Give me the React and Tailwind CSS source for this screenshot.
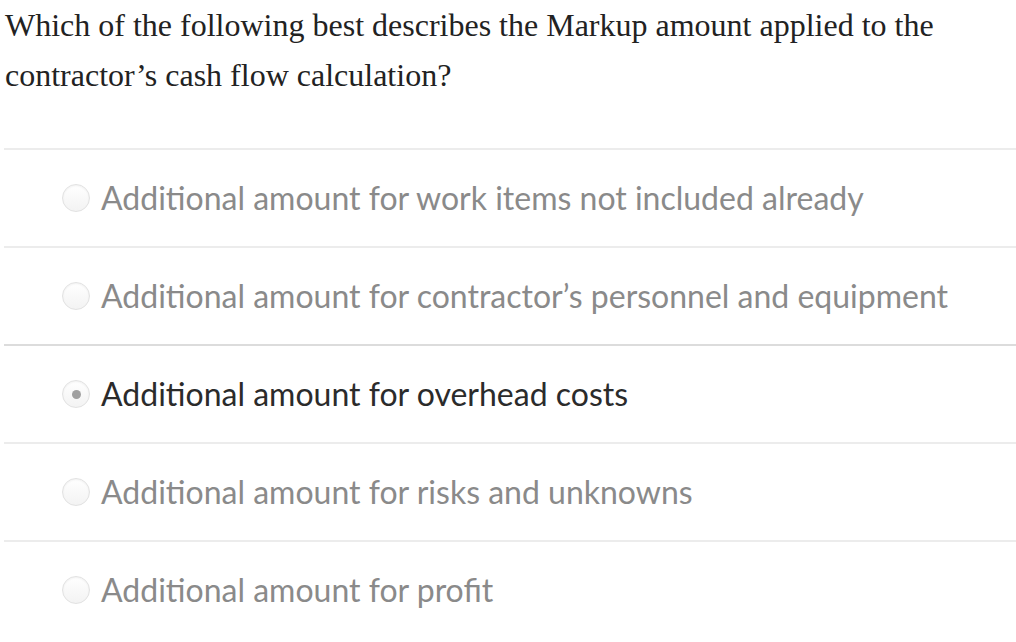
import React from "react";

const options = [
  "Additional amount for work items not included already",
  "Additional amount for contractor\u2019s personnel and equipment",
  "Additional amount for overhead costs",
  "Additional amount for risks and unknowns",
  "Additional amount for profit",
];

function Radio({ checked }) {
  return (
    <span className="relative flex h-[28px] w-[28px] shrink-0 items-center justify-center rounded-full border border-[#e2e2e2] bg-gradient-to-b from-[#ffffff] to-[#f3f3f3] shadow-[inset_0_1px_2px_rgba(0,0,0,0.06)]">
      {checked && <span className="h-[9px] w-[9px] rounded-full bg-[#a0a0a0]" />}
    </span>
  );
}

export default function App() {
  return (
    <div className="min-h-[642px] w-[1016px] overflow-hidden bg-white">
      <p className="pl-[5px] pt-0 font-['Liberation_Serif',serif] text-[32px] leading-[50px] text-[#222]">
        Which of the following best describes the Markup amount applied to the
        <br />
        contractor’s cash flow calculation?
      </p>
      <div className="ml-[4px] mt-[48px]">
        {options.map((o, i) => (
          <div
            key={i}
            className={`flex h-[98px] items-center gap-[11px] border-t-2 pl-[58px] ${
              i === 2 ? "border-[#dcdcdc]" : "border-[#ececec]"
            }`}
          >
            <Radio checked={i === 2} />
            <span
              className={`font-['Lato',sans-serif] text-[32px] leading-none ${
                i === 2 ? "text-[#2b2b2b]" : "text-[#8a8a8a]"
              }`}
            >
              {o}
            </span>
          </div>
        ))}
      </div>
    </div>
  );
}
